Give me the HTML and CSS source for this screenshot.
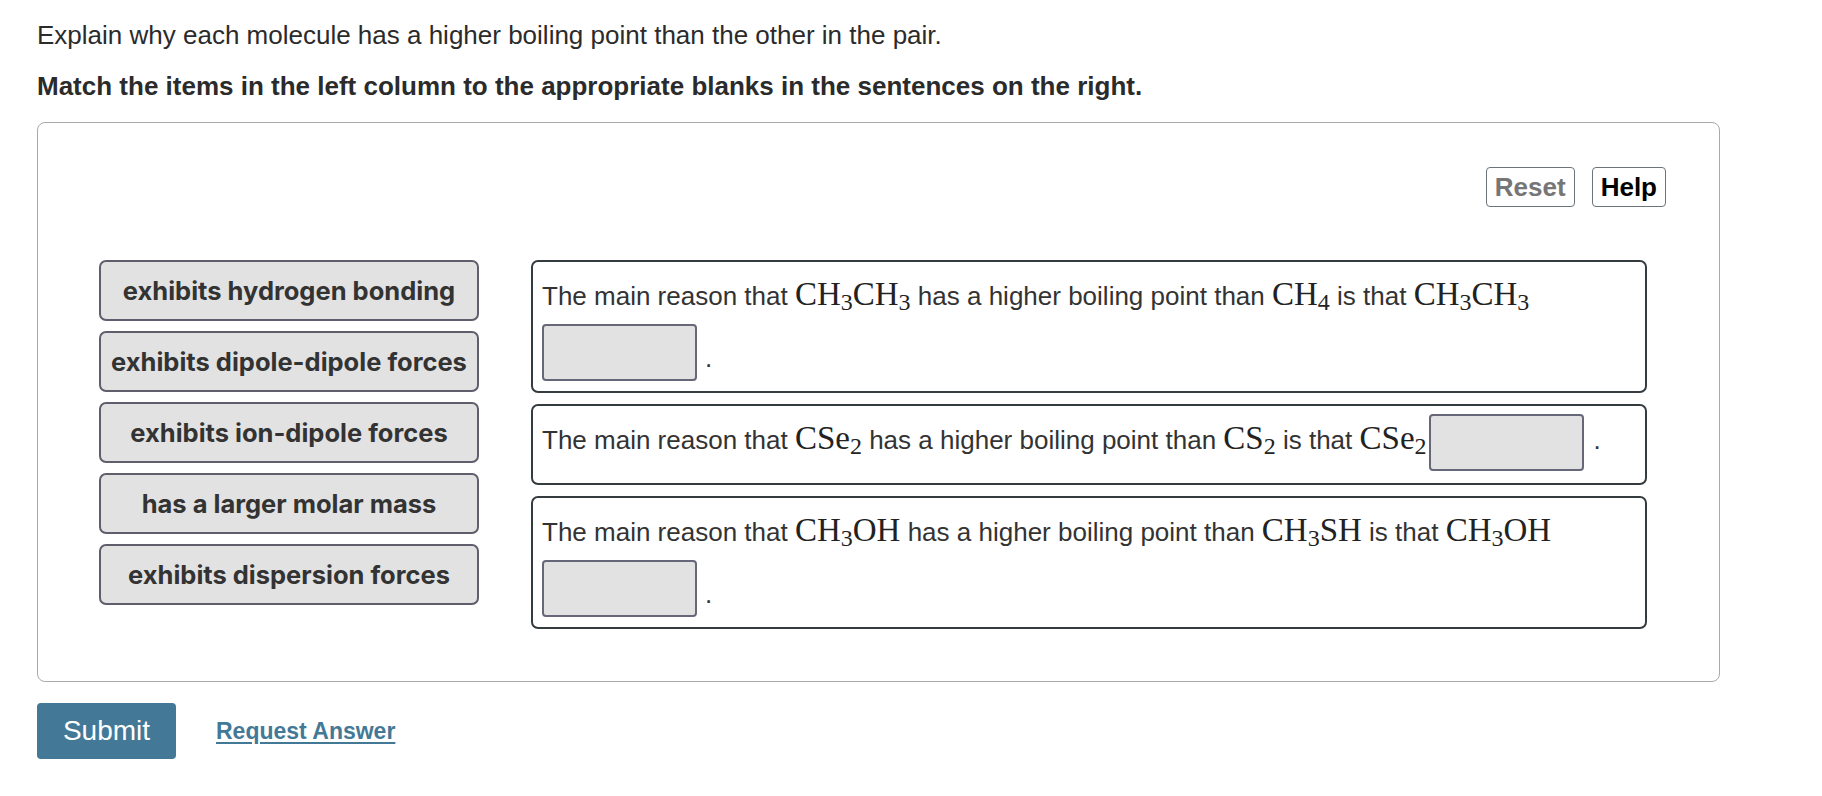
FILE: index.html
```html
<!DOCTYPE html>
<html>
<head>
<meta charset="utf-8">
<link rel="stylesheet" href="styles.css">
</head>
<body>
<div class="page">
  <p class="intro">Explain why each molecule has a higher boiling point than the other in the pair.</p>
  <p class="instr">Match the items in the left column to the appropriate blanks in the sentences on the right.</p>
  <div class="panel">
    <div class="toolbar">
      <button class="tbtn reset">Reset</button>
      <button class="tbtn help">Help</button>
    </div>
    <div class="work">
      <div class="items">
        <div class="item">exhibits hydrogen bonding</div>
        <div class="item">exhibits dipole-dipole forces</div>
        <div class="item">exhibits ion-dipole forces</div>
        <div class="item">has a larger molar mass</div>
        <div class="item">exhibits dispersion forces</div>
      </div>
      <div class="sentences">
        <div class="sentence tall">
          <div class="line">The main reason that <span class="m">CH<sub>3</sub>CH<sub>3</sub></span> has a higher boiling point than <span class="m">CH<sub>4</sub></span> is that <span class="m">CH<sub>3</sub>CH<sub>3</sub></span></div>
          <div class="line2"><span class="blank"></span><span class="dot">.</span></div>
        </div>
        <div class="sentence short">
          <div class="line">The main reason that <span class="m">CSe<sub>2</sub></span> has a higher boiling point than <span class="m">CS<sub>2</sub></span> is that <span class="m">CSe<sub>2</sub></span><span class="blank inl"></span><span class="dot">.</span></div>
        </div>
        <div class="sentence tall">
          <div class="line">The main reason that <span class="m">CH<sub>3</sub>OH</span> has a higher boiling point than <span class="m">CH<sub>3</sub>SH</span> is that <span class="m">CH<sub>3</sub>OH</span></div>
          <div class="line2"><span class="blank"></span><span class="dot">.</span></div>
        </div>
      </div>
    </div>
  </div>
  <div class="actions">
    <button class="submit">Submit</button>
    <a class="request" href="#">Request Answer</a>
  </div>
</div>
</body>
</html>
```

FILE: styles.css
```css
html, body {
  margin: 0;
  padding: 0;
  background: #fff;
}
body {
  font-family: "Liberation Sans", Arial, sans-serif;
  color: #333;
}
.page {
  padding: 20px 0 0 37px;
}
.intro {
  margin: 0;
  font-size: 26px;
  line-height: 30px;
  color: #2b2b2b;
}
.instr {
  margin: 21px 0 0;
  font-size: 26px;
  line-height: 30px;
  font-weight: bold;
  color: #2b2b2b;
}
.panel {
  box-sizing: border-box;
  width: 1683px;
  margin-top: 21px;
  border: 1.5px solid #aaa;
  border-radius: 8px;
  padding: 44px 0 52px 0;
}
.toolbar {
  display: flex;
  justify-content: flex-end;
  gap: 17px;
  padding-right: 53px;
}
.tbtn {
  box-sizing: border-box;
  height: 40px;
  border: 1.5px solid #6a7479;
  border-radius: 4px;
  background: #fff;
  font-family: "Liberation Sans", Arial, sans-serif;
  font-weight: bold;
  font-size: 26px;
  line-height: 1;
  padding: 0 8px;
}
.reset { color: #767676; }
.help { color: #000; }
.work {
  display: flex;
  gap: 52px;
  margin-top: 53px;
  padding-left: 61px;
}
.items {
  display: flex;
  flex-direction: column;
  gap: 10px;
  width: 380px;
}
.item {
  box-sizing: border-box;
  height: 61px;
  border: 2.5px solid #5e5e6c;
  border-radius: 7px;
  background: #e2e2e2;
  display: flex;
  align-items: center;
  justify-content: center;
  font-family: Inter, Lato, sans-serif;
  font-weight: 700;
  font-size: 25.5px;
  color: #333;
}
.sentences {
  display: flex;
  flex-direction: column;
  gap: 11px;
  width: 1116px;
}
.sentence {
  box-sizing: border-box;
  border: 2.5px solid #353c40;
  border-radius: 7px;
  padding: 14px 10px 0 9px;
  font-size: 26px;
  color: #333;
}
.sentence.tall { height: 133px; }
.sentence.short { height: 81px; padding-top: 8px; }
.line {
  line-height: 36px;
  white-space: nowrap;
}
.m {
  font-family: "Liberation Serif", "Times New Roman", serif;
  font-size: 33px;
  color: #222;
}
.m sub {
  font-size: 24px;
  vertical-align: -5px;
  line-height: 0;
}
.line2 {
  display: flex;
  align-items: flex-end;
  margin-top: 10px;
}
.blank {
  display: inline-block;
  box-sizing: border-box;
  width: 155px;
  height: 57px;
  background: #e2e2e2;
  border: 2.5px solid #67677a;
  border-radius: 4px;
  vertical-align: middle;
}
.blank.inl {
  margin-left: 2px;
}
.dot {
  margin-left: 8px;
  line-height: 1;
  padding-bottom: 10px;
}
.line .dot {
  padding-bottom: 0;
  margin-left: 10px;
}
.actions {
  display: flex;
  align-items: center;
  gap: 40px;
  margin-top: 21px;
}
.submit {
  width: 139px;
  height: 56px;
  border: none;
  border-radius: 4px;
  background: #437897;
  color: #fff;
  font-family: "Liberation Sans", Arial, sans-serif;
  font-size: 28px;
}
.request {
  color: #437897;
  font-weight: bold;
  font-size: 23px;
  text-decoration: underline;
  text-underline-offset: 3px;
}
```
